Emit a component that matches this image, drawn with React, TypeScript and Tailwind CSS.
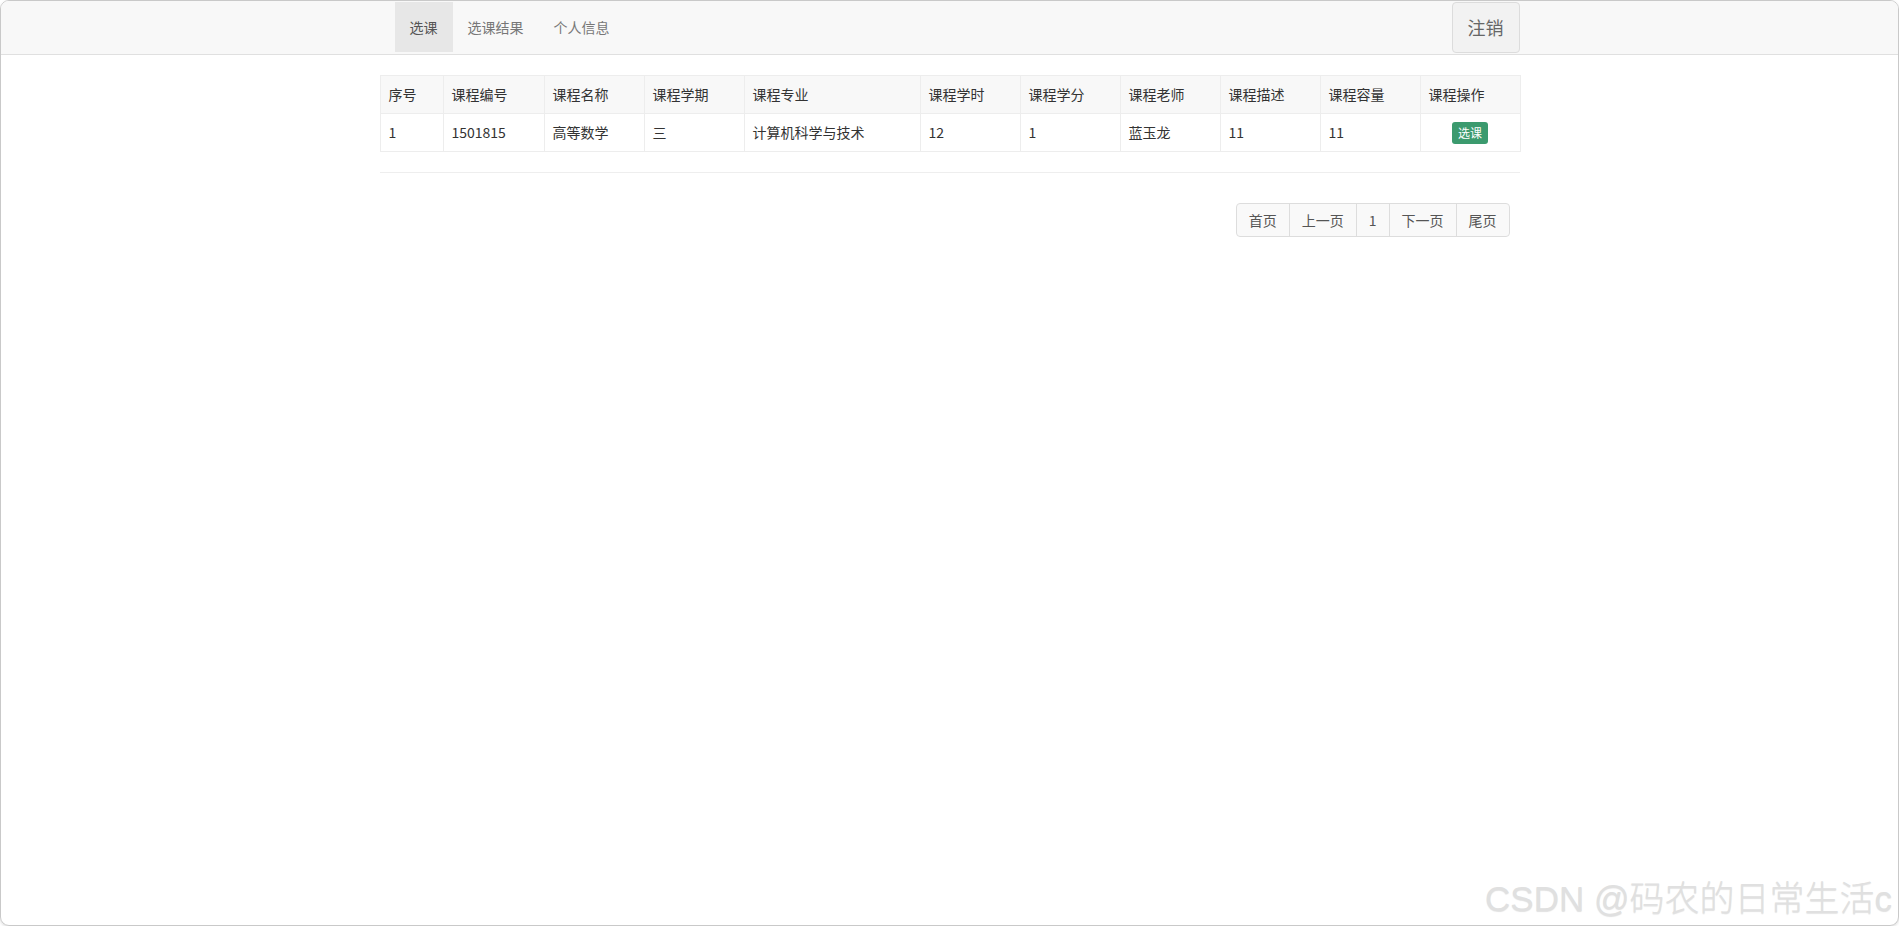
import React from "react";

const cols = [
  { label: "序号", w: "w-[63px]" },
  { label: "课程编号", w: "w-[101px]" },
  { label: "课程名称", w: "w-[100px]" },
  { label: "课程学期", w: "w-[100px]" },
  { label: "课程专业", w: "w-[176px]" },
  { label: "课程学时", w: "w-[100px]" },
  { label: "课程学分", w: "w-[100px]" },
  { label: "课程老师", w: "w-[100px]" },
  { label: "课程描述", w: "w-[100px]" },
  { label: "课程容量", w: "w-[100px]" },
  { label: "课程操作", w: "w-[100px]" },
];

const row = ["1", "1501815", "高等数学", "三", "计算机科学与技术", "12", "1", "蓝玉龙", "11", "11"];

const pages = ["首页", "上一页", "1", "下一页", "尾页"];

export default function App() {
  return (
    <div className="h-[926px] w-full bg-white font-['Noto_Sans_CJK_SC','Liberation_Sans',sans-serif] text-[14px] text-[#333]">
      <div className="relative h-full w-full overflow-hidden rounded-[9px] border border-[#c9c9c9] shadow-[0_1px_3px_rgba(0,0,0,0.15)]">
        {/* navbar */}
        <div className="h-[54px] border-b border-[#e0e0e0] bg-[#f8f8f8]">
          <div className="mx-auto flex w-[1140px] items-start justify-between pt-px">
            <ul className="flex pl-[15px]">
              <li className="flex h-[50px] items-center bg-[#e7e7e7] px-[15px] text-[#555]">选课</li>
              <li className="flex h-[50px] items-center px-[15px] text-[#777]">选课结果</li>
              <li className="flex h-[50px] items-center px-[15px] text-[#777]">个人信息</li>
            </ul>
            <button className="flex h-[51px] w-[68px] items-center justify-center rounded-[4px] border border-[#dcdcdc] bg-[#f2f2f2] text-[18px] text-[#666]">
              注销
            </button>
          </div>
        </div>

        {/* content */}
        <div className="mx-auto mt-[20px] w-[1140px]">
          <table className="w-full table-fixed border-collapse">
            <colgroup>
              {cols.map((c) => (
                <col key={c.label} className={c.w} />
              ))}
            </colgroup>
            <thead>
              <tr className="h-[38px] bg-[#f8f8f8]">
                {cols.map((c) => (
                  <th key={c.label} className="border border-[#ededed] px-[8px] text-left font-normal">
                    {c.label}
                  </th>
                ))}
              </tr>
            </thead>
            <tbody>
              <tr className="h-[38px] bg-white">
                {row.map((v, i) => (
                  <td key={i} className="border border-[#ededed] px-[8px]">
                    {v}
                  </td>
                ))}
                <td className="border border-[#ededed] px-[8px] text-center">
                  <span className="inline-flex h-[22px] w-[36px] items-center justify-center rounded-[3px] bg-[#3b9a6e] text-[12px] text-white">
                    选课
                  </span>
                </td>
              </tr>
            </tbody>
          </table>

          <hr className="mt-[20px] border-0 border-t border-[#eee]" />

          <div className="mt-[30px] flex justify-end pr-[10px]">
            <ul className="flex overflow-hidden rounded-[4px] border border-[#ddd] bg-[#f9f9f9]">
              {pages.map((p, i) => (
                <li
                  key={p}
                  className={
                    "flex h-[32px] items-center px-[12px] text-[#555] " +
                    (i > 0 ? "border-l border-[#ddd]" : "")
                  }
                >
                  {p}
                </li>
              ))}
            </ul>
          </div>
        </div>

        {/* watermark */}
        <div className="absolute bottom-[9px] right-[6px] font-['Liberation_Sans','Noto_Sans_CJK_SC',sans-serif] text-[35px] font-light leading-none text-[#e0e0e0] [text-shadow:0_1px_1px_rgba(0,0,0,0.12)]">
          CSDN @码农的日常生活c
        </div>
      </div>
    </div>
  );
}
